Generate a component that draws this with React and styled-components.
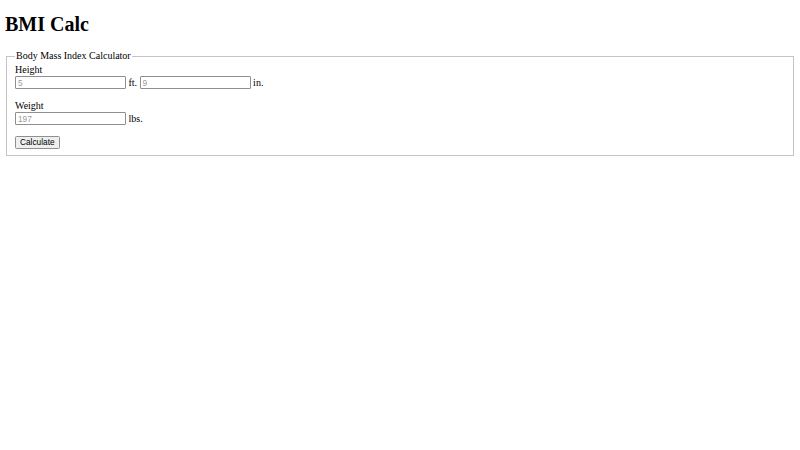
import styled, { createGlobalStyle } from "styled-components";

const GlobalStyle = createGlobalStyle`
  body {
    margin: 5px;
    background: #fff;
    color: #000;
    font-family: "Liberation Serif", "Times New Roman", serif;
    font-size: 10px;
  }
`;

const Title = styled.h1`
  font-size: 20px;
  font-weight: bold;
  line-height: 23px;
  margin: 8px 0 14px;
`;

const Panel = styled.fieldset`
  margin: 0 1px;
  padding: 2px 8px 6px;
  border: 1px solid #c4c4c4;
`;

const Legend = styled.legend`
  padding: 0 1px;
  font-size: 10px;
  line-height: 12px;
`;

const Group = styled.div`
  display: flex;
  flex-direction: column;
  align-items: flex-start;
  margin-bottom: ${({ $gap }) => $gap || "0px"};
`;

const Label = styled.label`
  display: block;
  line-height: 12px;
`;

const Row = styled.div`
  display: flex;
  align-items: center;
  gap: 2.5px;
  line-height: 12px;
`;

const Input = styled.input`
  box-sizing: border-box;
  width: 111px;
  height: 13px;
  padding: 0 2px;
  border: 1px solid #8f8f8f;
  border-radius: 1px;
  font-family: "Liberation Sans", Arial, sans-serif;
  font-size: 8.3px;
  background: #fff;

  &::placeholder {
    color: #9a9a9a;
  }
`;

const Button = styled.button`
  box-sizing: border-box;
  height: 13px;
  padding: 0 4px;
  border: 1px solid #8f8f8f;
  border-radius: 1.5px;
  background: #efefef;
  font-family: "Liberation Sans", Arial, sans-serif;
  font-size: 8.3px;
  color: #000;
  line-height: 11px;
`;

export default function App() {
  return (
    <>
      <GlobalStyle />
      <Title>BMI Calc</Title>
      <Panel>
        <Legend>Body Mass Index Calculator</Legend>
        <Group $gap="11px">
          <Label htmlFor="feet">Height</Label>
          <Row>
            <Input id="feet" type="text" placeholder="5" />
            <span>ft.</span>
            <Input id="inches" type="text" placeholder="9" />
            <span>in.</span>
          </Row>
        </Group>
        <Group $gap="11px">
          <Label htmlFor="weight">Weight</Label>
          <Row>
            <Input id="weight" type="text" placeholder="197" />
            <span>lbs.</span>
          </Row>
        </Group>
        <Button type="button">Calculate</Button>
      </Panel>
    </>
  );
}
